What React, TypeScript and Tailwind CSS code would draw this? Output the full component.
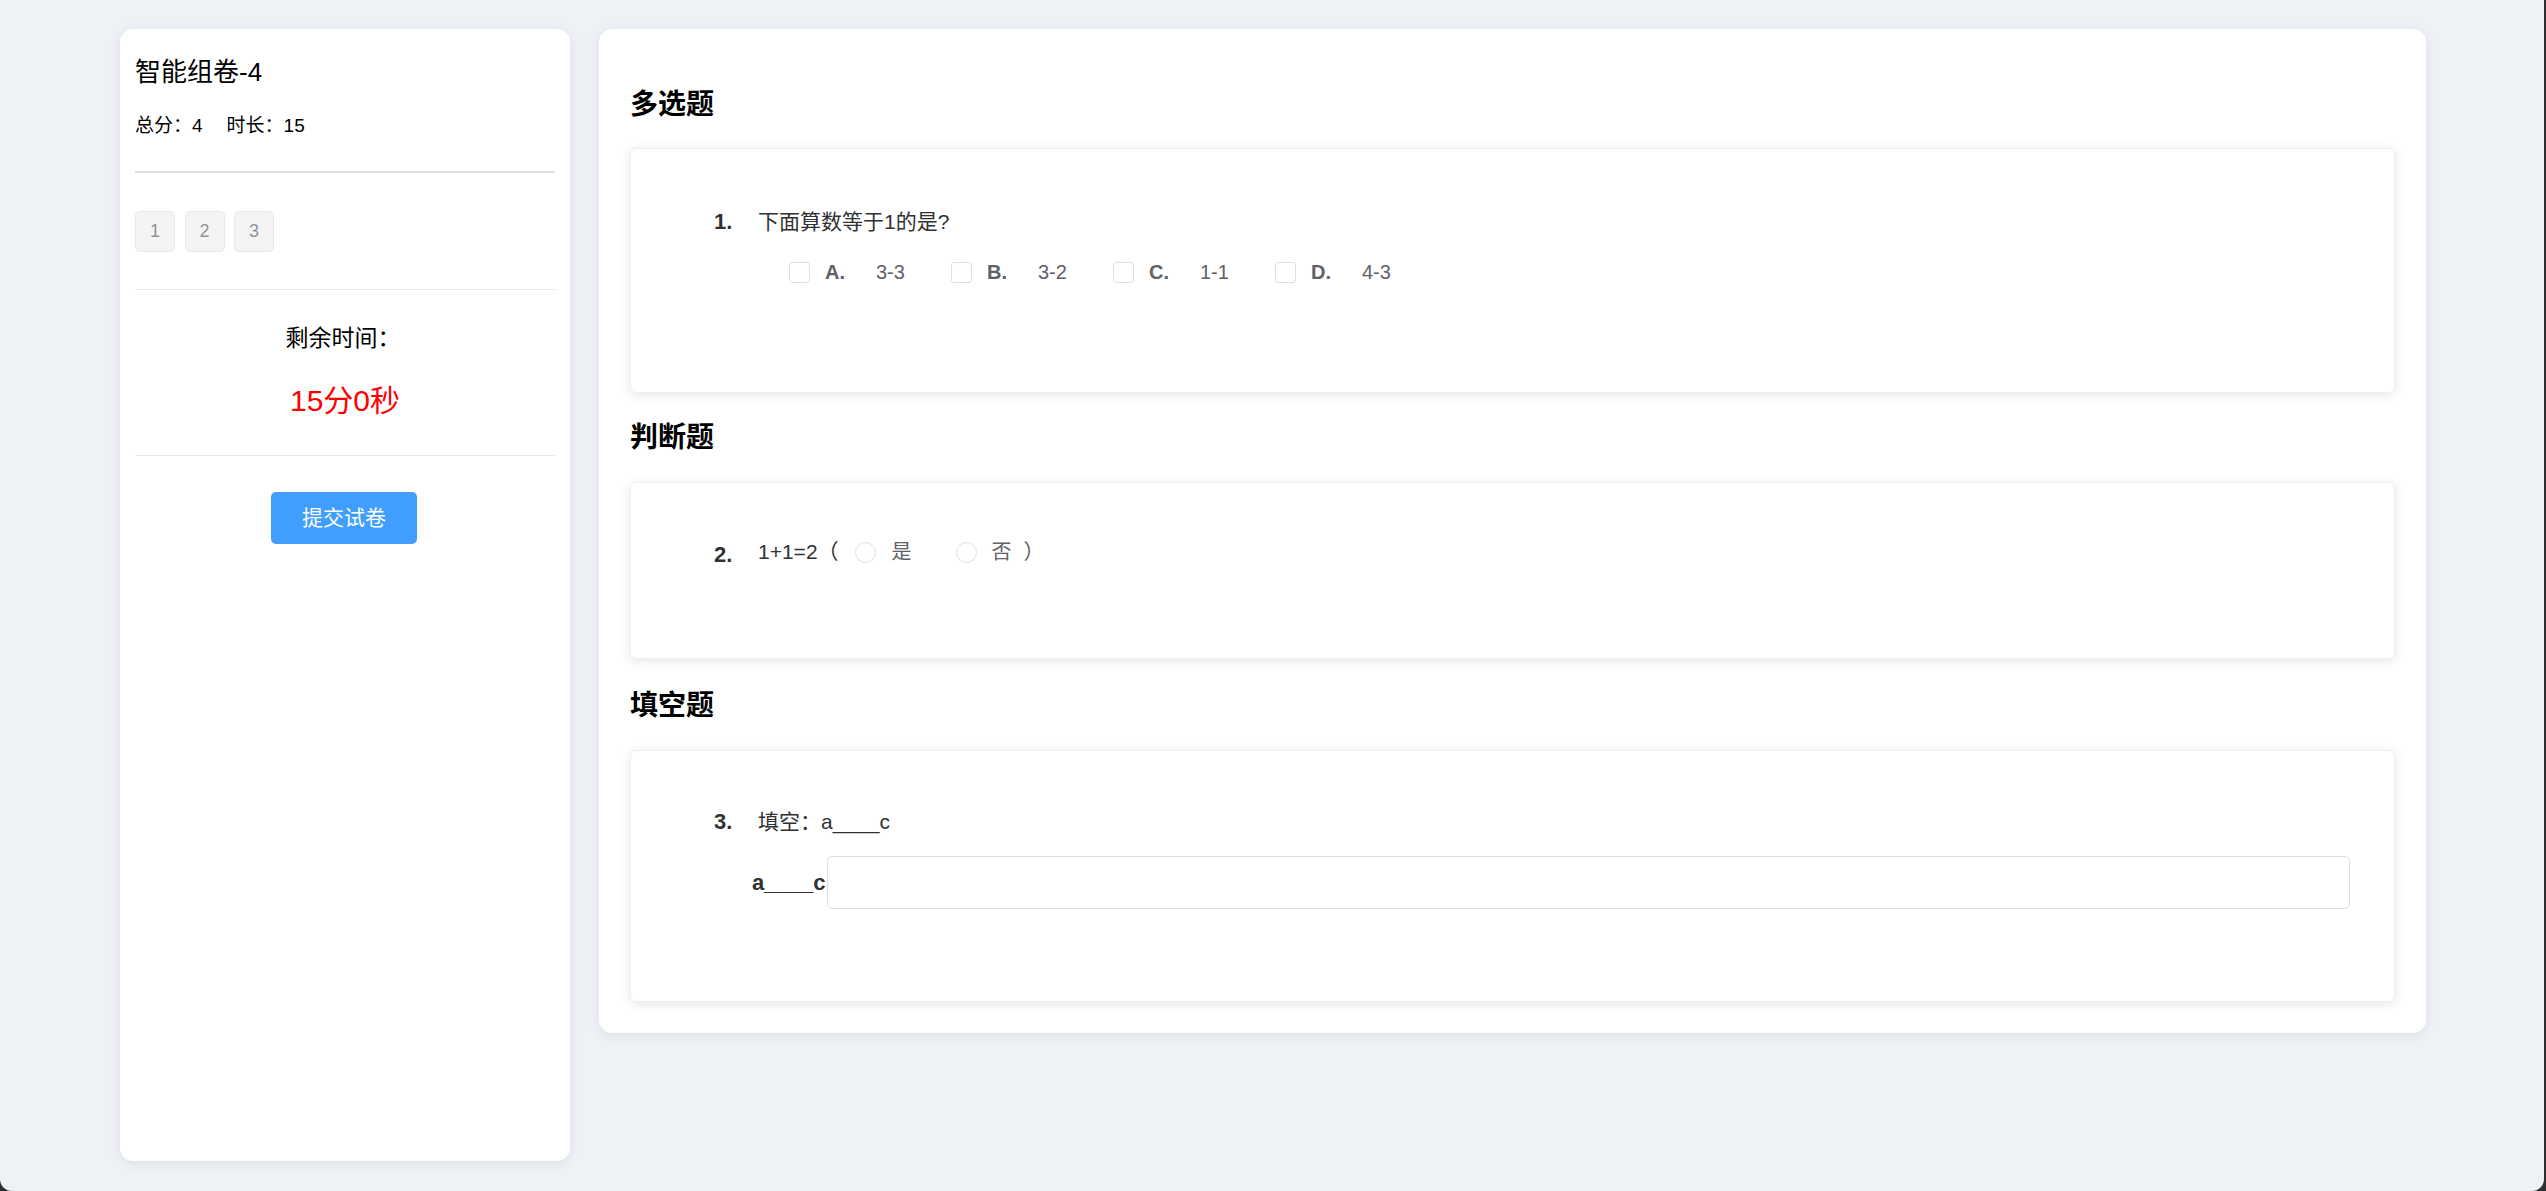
import { JSX } from "react";

const options = [
  { key: "A", value: "3-3" },
  { key: "B", value: "3-2" },
  { key: "C", value: "1-1" },
  { key: "D", value: "4-3" },
];

function SectionTitle({ children, className = "" }: { children: string; className?: string }) {
  return (
    <h3 className={`text-[28px] leading-[40px] font-bold text-black ${className}`}>
      {children}
    </h3>
  );
}

export default function App(): JSX.Element {
  return (
    <div className="h-[1191px] bg-[#2e2e2e] font-['Liberation_Sans','Noto_Sans_CJK_SC',sans-serif]">
      <div className="h-full mr-[2px] rounded-b-[12px] bg-[#eef1f6] flex items-start gap-[29px] pl-[120px] pr-[118px] pt-[29px]">
        {/* Sidebar */}
        <div className="w-[450px] h-[1132px] shrink-0 bg-white rounded-[13px] shadow-[0_2px_12px_rgba(0,0,0,0.08)] px-[15px] pt-[25px]">
          <h2 className="text-[26px] leading-[36px] text-black">智能组卷-4</h2>
          <div className="mt-[23px] flex gap-[24px] text-[19px] leading-[26px] text-black">
            <span>总分：4</span>
            <span>时长：15</span>
          </div>
          <div className="mt-[32px] h-[2px] bg-[#dcdfe6]"></div>

          <div className="mt-[38px] flex gap-[9.5px]">
            {[1, 2, 3].map((n) => (
              <button
                key={n}
                className="w-[40px] h-[41px] flex items-center justify-center rounded-[5px] border border-[#e9e9eb] bg-[#f4f4f5] text-[18px] text-[#909399]"
              >
                {n}
              </button>
            ))}
          </div>
          <div className="mt-[37px] h-px bg-[#e4e7ed]"></div>

          <div className="mt-[32px] pr-[4px] text-center text-[23px] leading-[32px] text-black">剩余时间：</div>
          <div className="mt-[27px] text-center text-[30px] leading-[40px] text-[#ff0000]">15分0秒</div>
          <div className="mt-[34px] h-px bg-[#e4e7ed]"></div>

          <div className="mt-[36px] flex justify-center pr-[2px]">
            <button className="w-[146px] h-[52px] rounded-[5px] bg-[#409eff] text-[21px] text-white">
              提交试卷
            </button>
          </div>
        </div>

        {/* Paper */}
        <div className="flex-1 bg-white rounded-[13px] shadow-[0_2px_12px_rgba(0,0,0,0.08)] px-[31px] pt-[56px] pb-[31px]">
          <SectionTitle>多选题</SectionTitle>
          <div className="mt-[23px] h-[245px] rounded-[6px] border border-[#ebeef5] shadow-[0_2px_12px_rgba(0,0,0,0.1)] pl-[83px] pt-[57px]">
            <div className="flex">
              <span className="w-[44px] text-[22px] leading-[32px] font-bold text-[#303133]">1.</span>
              <div>
                <p className="text-[21px] leading-[32px] text-[#303133]">下面算数等于1的是?</p>
                <div className="mt-[18px] ml-[31px] flex">
                  {options.map((o) => (
                    <label key={o.key} className="w-[162px] flex items-center text-[20px] leading-[32px] text-[#606266]">
                      <span className="w-[21px] h-[21px] rounded-[3px] border border-[#dcdfe6] bg-white"></span>
                      <span className="ml-[15px] w-[36px] font-bold">{o.key}.</span>
                      <span className="ml-[15px]">{o.value}</span>
                    </label>
                  ))}
                </div>
              </div>
            </div>
          </div>

          <SectionTitle className="mt-[25px]">判断题</SectionTitle>
          <div className="mt-[24px] h-[177px] rounded-[6px] border border-[#ebeef5] shadow-[0_2px_12px_rgba(0,0,0,0.1)] pl-[83px] pt-[50px]">
            <div className="flex">
              <span className="w-[44px] mt-[6px] text-[22px] leading-[32px] font-bold text-[#303133]">2.</span>
              <div className="flex items-center text-[21px] leading-[32px] text-[#303133]">
                <span>1+1=2（</span>
                <span className="ml-[16px] w-[21px] h-[21px] rounded-full border border-[#dcdfe6]"></span>
                <span className="ml-[16px] text-[20px] text-[#606266]">是</span>
                <span className="ml-[44px] w-[21px] h-[21px] rounded-full border border-[#dcdfe6]"></span>
                <span className="ml-[15px] text-[20px] text-[#606266]">否</span>
                <span className="ml-[12px] text-[#606266]">）</span>
              </div>
            </div>
          </div>

          <SectionTitle className="mt-[27px]">填空题</SectionTitle>
          <div className="mt-[24px] h-[252px] rounded-[6px] border border-[#ebeef5] shadow-[0_2px_12px_rgba(0,0,0,0.1)] pl-[83px] pr-[44px] pt-[55px]">
            <div className="flex">
              <span className="w-[44px] text-[22px] leading-[32px] font-bold text-[#303133]">3.</span>
              <p className="text-[21px] leading-[32px] text-[#303133]">填空：a____c</p>
            </div>
            <div className="mt-[18px] ml-[38px] flex items-center">
              <span className="text-[22px] font-bold text-[#303133]">a____c</span>
              <input
                type="text"
                className="ml-[2px] flex-1 h-[53px] rounded-[5px] border border-[#dcdfe6] bg-white px-[15px] text-[20px] outline-none"
              />
            </div>
          </div>
        </div>
      </div>
    </div>
  );
}
